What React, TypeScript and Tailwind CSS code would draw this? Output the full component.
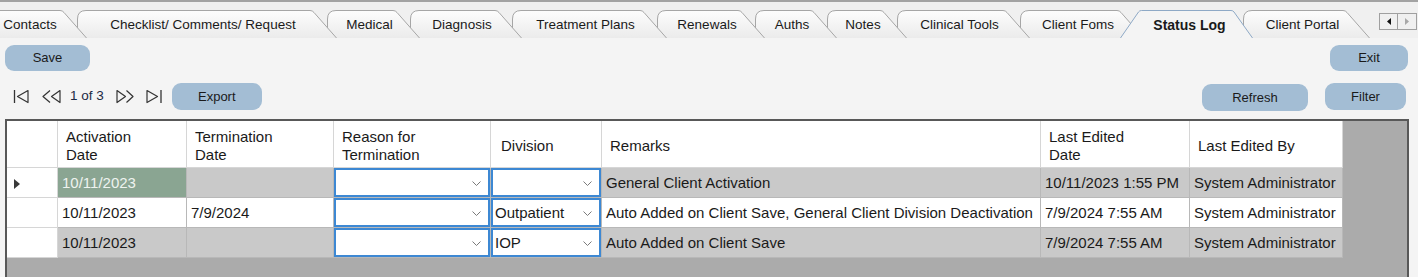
import React from "react";

type TabDef = { label: string; w: number; cls: string; selected?: boolean };

const tabs: TabDef[] = [
  { label: "Contacts", w: 106, cls: "w-[106px] -ml-[19px] z-[12]" },
  { label: "Checklist/ Comments/ Request", w: 260, cls: "w-[260px] -ml-[10px] z-[11]" },
  { label: "Medical", w: 93, cls: "w-[93px] -ml-[10px] z-[10]" },
  { label: "Diagnosis", w: 112, cls: "w-[112px] -ml-[10px] z-[9]" },
  { label: "Treatment Plans", w: 155, cls: "w-[155px] -ml-[10px] z-[8]" },
  { label: "Renewals", w: 108, cls: "w-[108px] -ml-[10px] z-[7]" },
  { label: "Auths", w: 82, cls: "w-[82px] -ml-[10px] z-[6]" },
  { label: "Notes", w: 80, cls: "w-[80px] -ml-[10px] z-[5]" },
  { label: "Clinical Tools", w: 133, cls: "w-[133px] -ml-[10px] z-[4]" },
  { label: "Client Foms", w: 124, cls: "w-[124px] -ml-[10px] z-[3]" },
  { label: "Status Log", w: 133, cls: "w-[133px] -ml-[24px] z-[20]", selected: true },
  { label: "Client Portal", w: 127, cls: "w-[127px] -ml-[10px] z-[1]" },
];

const rows = [
  {
    act: "10/11/2023",
    term: "",
    div: "",
    rem: "General Client Activation",
    date: "10/11/2023 1:55 PM",
    by: "System Administrator",
    gray: true,
    current: true,
  },
  {
    act: "10/11/2023",
    term: "7/9/2024",
    div: "Outpatient",
    rem: "Auto Added on Client Save, General Client Division Deactivation",
    date: "7/9/2024 7:55 AM",
    by: "System Administrator",
    gray: false,
    current: false,
  },
  {
    act: "10/11/2023",
    term: "",
    div: "IOP",
    rem: "Auto Added on Client Save",
    date: "7/9/2024 7:55 AM",
    by: "System Administrator",
    gray: true,
    current: false,
  },
];

function TabShape({ w, selected, id }: { w: number; selected?: boolean; id: string }) {
  const d = selected
    ? `M0.5 28 L18.5 2 Q19.5 0.5 21.5 0.5 L${w - 22} 0.5 Q${w - 20} 0.5 ${w - 19} 2 L${w - 0.5} 28`
    : `M0.5 28 L0.5 9 Q0.5 0.5 9 0.5 L${w - 27} 0.5 Q${w - 24.5} 0.5 ${w - 23} 2.5 L${w - 0.5} 28`;
  return (
    <svg className="absolute inset-0" width={w} height={28} viewBox={`0 0 ${w} 28`}>
      <defs>
        <linearGradient id={id} x1="0" y1="0" x2="0" y2="1">
          <stop offset="0" stopColor={selected ? "#f4f4f4" : "#fdfdfd"} />
          <stop offset="1" stopColor={selected ? "#f4f4f4" : "#ebebeb"} />
        </linearGradient>
      </defs>
      <path d={d + " Z"} fill={`url(#${id})`} />
      <path d={d} fill="none" stroke={selected ? "#8ea9c6" : "#a6a6a6"} strokeWidth="1" />
    </svg>
  );
}

function Button({ label, cls }: { label: string; cls: string }) {
  return (
    <div
      className={`flex items-center justify-center rounded-[9px] bg-[#a3bdd4] text-[13px] text-[#1a1a1a] ${cls}`}
    >
      {label}
    </div>
  );
}

function Chevron() {
  return (
    <svg width="9" height="5" viewBox="0 0 9 5" className="shrink-0">
      <path d="M0.5 0.5 L4.5 4.5 L8.5 0.5" fill="none" stroke="#7a7a7a" strokeWidth="1" />
    </svg>
  );
}

function Combo({ value, cls }: { value: string; cls: string }) {
  return (
    <div className={`h-full border-r border-b border-[#b8b8b8] bg-white ${cls}`}>
      <div className="flex h-full items-center justify-between border-2 border-[#3d88d3] pl-[2px] pr-[7px] pt-[2px]">
        <span>{value}</span>
        <Chevron />
      </div>
    </div>
  );
}

export default function App() {
  return (
    <div className="relative h-[277px] w-[1418px] overflow-hidden bg-[#f0f0f0] font-['Liberation_Sans',Arial,sans-serif] text-[#1a1a1a]">
      <div className="h-[2px] bg-[#a3a3a3]" />

      {/* tab strip */}
      <div className="relative flex h-[36px] items-end">
        {tabs.map((t, i) => (
          <div key={t.label} className={`relative h-[28px] shrink-0 ${t.cls}`}>
            <TabShape w={t.w} selected={t.selected} id={`tabg${i}`} />
            <div
              className={`relative flex h-full items-center justify-center whitespace-nowrap pt-[3px] ${
                t.selected ? "pl-[10px] pr-[4px] text-[14px] font-bold" : "pl-[8px] pr-[16px] text-[13.5px]"
              }`}
            >
              {t.label}
            </div>
          </div>
        ))}
        <div className="absolute left-[1379px] top-[11px] flex h-[17px] w-[38px] border border-[#a0a0a0] bg-[#f0f0f0]">
          <div className="flex w-[18px] items-center justify-center border-r border-[#a0a0a0]">
            <svg width="4" height="7" viewBox="0 0 4 7">
              <path d="M4 0 L0 3.5 L4 7 Z" fill="#111" />
            </svg>
          </div>
          <div className="flex flex-1 items-center justify-center">
            <svg width="4" height="7" viewBox="0 0 4 7">
              <path d="M0 0 L4 3.5 L0 7 Z" fill="#a8a8a8" />
            </svg>
          </div>
        </div>
      </div>

      {/* content */}
      <div className="h-[239px] bg-[#f4f4f4]">
        <div className="flex justify-between pl-[5px] pr-[10px] pt-[7px]">
          <Button label="Save" cls="h-[26px] w-[85px]" />
          <Button label="Exit" cls="h-[26px] w-[78px]" />
        </div>

        <div className="mt-[12px] flex h-[27px] items-center justify-between pl-[13px] pr-[12px]">
          <div className="flex items-center">
            <svg width="16" height="15" viewBox="0 0 16 15" className="text-[#333]">
              <path d="M1.5 1 V14" stroke="currentColor" strokeWidth="1.3" />
              <path d="M15 1.5 L4.5 7.5 L15 13.5 Z" fill="none" stroke="currentColor" strokeWidth="1.2" strokeLinejoin="round" />
            </svg>
            <svg width="19" height="15" viewBox="0 0 19 15" className="ml-[13px] text-[#333]">
              <path d="M8 1.5 L1 7.5 L8 13.5" fill="none" stroke="currentColor" strokeWidth="1.2" strokeLinejoin="round" />
              <path d="M18 1.5 L9.5 7.5 L18 13.5 Z" fill="none" stroke="currentColor" strokeWidth="1.2" strokeLinejoin="round" />
            </svg>
            <span className="ml-[9px] text-[13.5px] text-[#1c2a44]">1 of 3</span>
            <svg width="18" height="15" viewBox="0 0 18 15" className="ml-[12px] text-[#333]">
              <path d="M1 1.5 L9.5 7.5 L1 13.5 Z" fill="none" stroke="currentColor" strokeWidth="1.2" strokeLinejoin="round" />
              <path d="M10.5 1.5 L17 7.5 L10.5 13.5" fill="none" stroke="currentColor" strokeWidth="1.2" strokeLinejoin="round" />
            </svg>
            <svg width="17" height="15" viewBox="0 0 17 15" className="ml-[12px] text-[#333]">
              <path d="M1 1.5 L11.5 7.5 L1 13.5 Z" fill="none" stroke="currentColor" strokeWidth="1.2" strokeLinejoin="round" />
              <path d="M15 1 V14" stroke="currentColor" strokeWidth="1.3" />
            </svg>
            <Button label="Export" cls="ml-[9px] h-[27px] w-[90px]" />
          </div>
          <div className="flex items-center gap-[17px]">
            <Button label="Refresh" cls="mt-[2px] h-[27px] w-[106px]" />
            <Button label="Filter" cls="h-[27px] w-[81px]" />
          </div>
        </div>

        {/* grid */}
        <div className="ml-[5px] mt-[9px] h-[170px] w-[1404px] border-2 border-[#585858] bg-[#ababab] text-[15px]">
          <div className="flex h-[47px]">
            <div className="w-[51px] border-r border-b border-[#d6d6d6] bg-white" />
            {[
              { t: ["Activation", "Date"], w: "w-[129px]" },
              { t: ["Termination", "Date"], w: "w-[147px]" },
              { t: ["Reason for", "Termination"], w: "w-[157px] pl-[7px]" },
              { t: ["Division"], w: "w-[111px] pl-[10px]" },
              { t: ["Remarks"], w: "w-[439px]" },
              { t: ["Last Edited", "Date"], w: "w-[149px]" },
              { t: ["Last Edited By"], w: "w-[153px]" },
            ].map((h) => (
              <div
                key={h.t.join(" ")}
                className={`flex flex-col justify-center border-r border-b border-[#d6d6d6] bg-white pl-[8px] pt-[3px] leading-[18px] ${h.w}`}
              >
                {h.t.map((l) => (
                  <span key={l}>{l}</span>
                ))}
              </div>
            ))}
          </div>

          {rows.map((r, i) => {
            const bg = r.gray ? "bg-[#c9c9c9]" : "bg-white";
            const cell = `flex items-center whitespace-nowrap border-r border-b border-[#b8b8b8] pl-[4px] pt-[2px] ${bg}`;
            return (
              <div key={i} className="flex h-[30px]">
                <div className="flex w-[51px] items-center border-r border-b border-[#d6d6d6] bg-white pl-[7px] pt-[2px]">
                  {r.current && (
                    <svg width="6" height="10" viewBox="0 0 6 10">
                      <path d="M0 0 L6 5 L0 10 Z" fill="#3a3a3a" />
                    </svg>
                  )}
                </div>
                <div
                  className={`flex w-[129px] items-center border-r border-b border-[#b8b8b8] pl-[4px] pt-[2px] ${
                    r.current ? "bg-[#8aa592] text-[#eef3ef]" : bg
                  }`}
                >
                  {r.act}
                </div>
                <div className={`w-[147px] ${cell}`}>{r.term}</div>
                <Combo value="" cls="w-[157px]" />
                <Combo value={r.div} cls="w-[111px]" />
                <div className={`w-[439px] ${cell}`}>{r.rem}</div>
                <div className={`w-[149px] ${cell}`}>{r.date}</div>
                <div className={`w-[153px] ${cell}`}>{r.by}</div>
              </div>
            );
          })}
        </div>
      </div>
    </div>
  );
}
